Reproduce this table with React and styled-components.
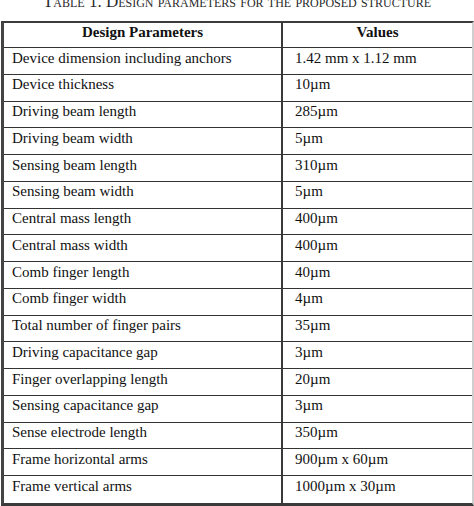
import React from "react";
import styled, { createGlobalStyle } from "styled-components";

const Global = createGlobalStyle`
  html, body { margin: 0; padding: 0; background: #fff; }
  body { font-family: "Liberation Serif", "Times New Roman", serif; color: #111; }
`;

const Page = styled.div`
  width: 474px;
  height: 506px;
  overflow: hidden;
  background: #fff;
`;

const Caption = styled.div`
  height: 21px;
  box-sizing: border-box;
  padding-bottom: 18px;
  line-height: 3px;
  font-size: 17px;
  font-variant: small-caps;
  text-align: center;
  color: #2a2a2a;
  white-space: nowrap;
`;

const Table = styled.div`
  margin-left: 1px;
  border-top: 2px solid #3c3c3c;
  border-left: 3px solid #444;
  border-right: 2px solid #cfcfcf;
  border-bottom: 3px solid #3a3a3a;
`;

const Row = styled.div`
  display: grid;
  grid-template-columns: 279px 1fr;
  box-sizing: border-box;
  height: ${(p) => (p.$header ? "25px" : "26.76px")};
  border-bottom: ${(p) => (p.$last ? "none" : "1.5px solid #333")};
`;

const Cell = styled.div`
  display: flex;
  align-items: flex-start;
  justify-content: ${(p) => (p.$header ? "center" : "flex-start")};
  box-sizing: border-box;
  padding-top: ${(p) => (p.$header ? "0.5px" : "1.5px")};
  padding-left: ${(p) => (p.$header ? "0" : p.$right ? "12px" : "8px")};
  font-size: 15px;
  line-height: 17px;
  font-weight: ${(p) => (p.$header ? "bold" : "normal")};
  border-right: ${(p) => (p.$right ? "none" : "2px solid #3a3a3a")};
  white-space: nowrap;
`;

const rows = [
  ["Device dimension including anchors", "1.42 mm x 1.12 mm"],
  ["Device thickness", "10µm"],
  ["Driving beam length", "285µm"],
  ["Driving beam width", "5µm"],
  ["Sensing beam length", "310µm"],
  ["Sensing beam width", "5µm"],
  ["Central mass length", "400µm"],
  ["Central mass width", "400µm"],
  ["Comb finger length", "40µm"],
  ["Comb finger width", "4µm"],
  ["Total number of finger pairs", "35µm"],
  ["Driving capacitance gap", "3µm"],
  ["Finger overlapping length", "20µm"],
  ["Sensing capacitance gap", "3µm"],
  ["Sense electrode length", "350µm"],
  ["Frame horizontal arms", "900µm x 60µm"],
  ["Frame vertical arms", "1000µm x 30µm"],
];

export default function App() {
  return (
    <Page>
      <Global />
      <Caption>Table 1. Design parameters for the proposed structure</Caption>
      <Table>
        <Row $header>
          <Cell $header>Design Parameters</Cell>
          <Cell $header $right>Values</Cell>
        </Row>
        {rows.map(([k, v], i) => (
          <Row key={k} $last={i === rows.length - 1}>
            <Cell>{k}</Cell>
            <Cell $right>{v}</Cell>
          </Row>
        ))}
      </Table>
    </Page>
  );
}
